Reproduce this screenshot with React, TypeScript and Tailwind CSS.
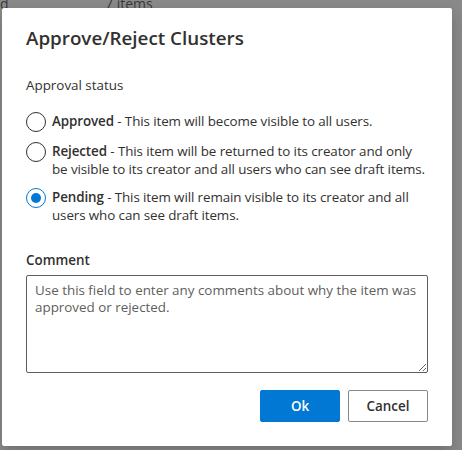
import React, { useState } from "react";

const options = [
  { key: "approved", label: "Approved", desc: "This item will become visible to all users." },
  { key: "rejected", label: "Rejected", desc: "This item will be returned to its creator and only be visible to its creator and all users who can see draft items." },
  { key: "pending", label: "Pending", desc: "This item will remain visible to its creator and all users who can see draft items." },
];

const font = { fontFamily: '"Open Sans", "Noto Sans", sans-serif' };

export default function App() {
  const [value, setValue] = useState("pending");
  return (
    <div
      className="relative w-[462px] h-[450px] overflow-hidden bg-[#8a8a8a] pl-[2px] pt-[8px] text-[#323130]"
      style={font}
    >
      <div className="absolute left-0 top-[-7px] flex text-[14px] text-[#3a3a3a]">
        <span className="w-[105px]">d</span>
        <span>7 items</span>
      </div>
      <div className="relative flex h-[438px] w-[450px] flex-col rounded-[2px] bg-white px-6 pb-6 pt-4 shadow-[0_6px_16px_rgba(0,0,0,0.2)]">
        <h1 className="text-[18.8px] font-semibold leading-[28px]">Approve/Reject Clusters</h1>
        <div className="mt-[23px] text-[13.4px] leading-[20px]">Approval status</div>
        <div className="mt-[17px] flex flex-col gap-[10px]">
          {options.map((o) => {
            const checked = value === o.key;
            return (
              <div
                key={o.key}
                role="radio"
                aria-checked={checked}
                onClick={() => setValue(o.key)}
                className="flex cursor-pointer items-start gap-[6px]"
              >
                <span
                  className={
                    checked
                      ? "flex h-5 w-5 shrink-0 items-center justify-center rounded-full border border-[#0078d4]"
                      : "flex h-5 w-5 shrink-0 items-center justify-center rounded-full border border-[#323130]"
                  }
                >
                  {checked && <span className="h-[10px] w-[10px] rounded-full bg-[#0078d4]" />}
                </span>
                <span className="text-[13.4px] leading-[18px] tracking-[-0.1px]">
                  <span className="font-semibold">{o.label}</span> - {o.desc}
                </span>
              </div>
            );
          })}
        </div>
        <div className="mt-[26px] text-[13.4px] font-semibold leading-[20px]">Comment</div>
        <textarea
          className="mt-[5px] h-[98px] w-full resize-y rounded-[2px] border border-[#605e5c] px-2 py-[6px] text-[13.4px] leading-[17px] text-[#323130] outline-none placeholder:text-[#605e5c]"
          placeholder="Use this field to enter any comments about why the item was approved or rejected."
          style={font}
        />
        <div className="mt-auto flex justify-end gap-2">
          <button className="h-8 min-w-[80px] rounded-[2px] border border-[#0078d4] bg-[#0078d4] px-4 text-[13.4px] font-semibold text-white">
            Ok
          </button>
          <button className="h-8 min-w-[80px] rounded-[2px] border border-[#8a8886] bg-white px-4 text-[13.4px] font-semibold text-[#323130]">
            Cancel
          </button>
        </div>
      </div>
    </div>
  );
}
